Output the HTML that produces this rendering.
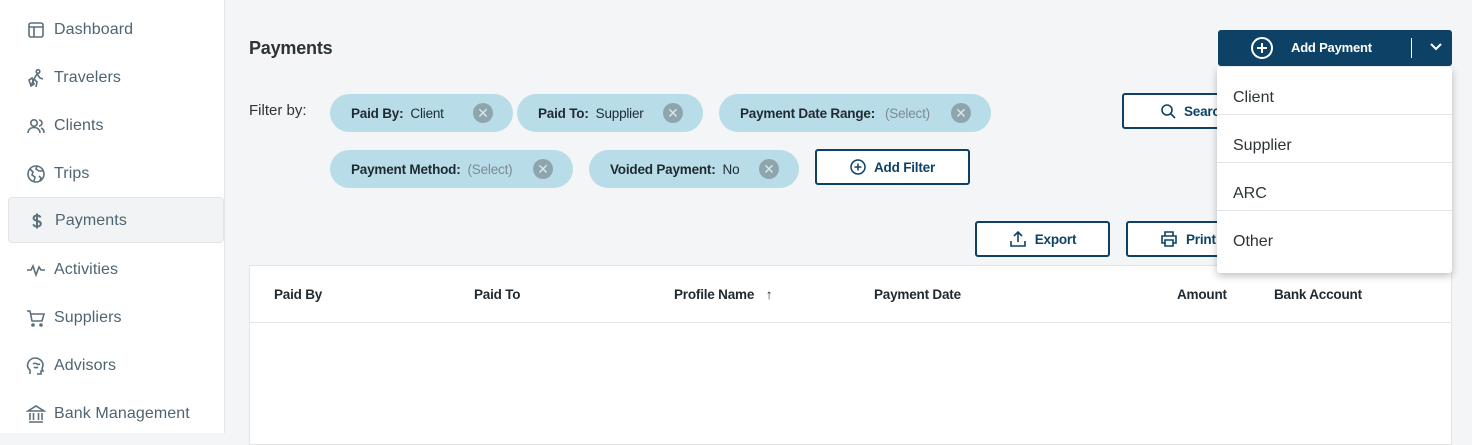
<!DOCTYPE html>
<html><head><meta charset="utf-8"><style>
*{box-sizing:border-box;margin:0;padding:0}
body{width:1472px;height:433px;overflow:hidden;background:#f4f5f7;font-family:"Liberation Sans",sans-serif;position:relative}
.side{position:absolute;left:0;top:0;width:225px;height:433px;background:#fff;border-right:1px solid #e3e5e8}
.nav{position:absolute;left:8px;width:216px;height:46px;display:flex;align-items:center;padding-left:18px;font-size:16px;color:#4f6472;letter-spacing:.1px}
.nav svg{width:20px;height:20px;margin-right:8px;fill:none;stroke:#5b6f7c;stroke-width:1.6}
.nav.act{background:#f2f3f4;border:1px solid #e3e5e8;border-radius:4px}
.abs{position:absolute}
.chip{position:absolute;height:38px;border-radius:19px;background:#b9dde8;display:flex;align-items:center;padding-left:21px;font-size:13.5px;color:#1f2a30;letter-spacing:-.2px}
.chip b{font-weight:bold;margin-right:7px}
.chip .sel{color:#7a8a90}
.chip .x{position:absolute;right:20px;top:9px;width:20px;height:20px;border-radius:50%;background:#8fa5ae;color:#d8e8ee;font-size:14px;line-height:20px;text-align:center;letter-spacing:0}
.btn{position:absolute;border:2px solid #0d4266;border-radius:3px;background:#fff;color:#0d4266;font-size:13.5px;font-weight:bold;display:flex;align-items:center;justify-content:center;gap:8px;letter-spacing:-.2px}
.th{position:absolute;top:287px;font-size:13.5px;font-weight:bold;color:#1f2a30;letter-spacing:-.2px}
.dd{position:absolute;left:1217px;top:67px;width:235px;height:206px;background:#fff;border-radius:3px;box-shadow:0 3px 8px rgba(0,0,0,.25)}
.dd div{height:48px;border-bottom:1px solid #e2e4e6;padding-left:16px;line-height:62px;font-size:16px;color:#2c3438}
</style></head><body>
<div class="side">
<div class="nav" style="top:7px"><svg viewBox="0 0 20 20"><rect x="3" y="3" width="14" height="14" rx="2"/><path d="M3 7h14M8 7v10"/></svg>Dashboard</div>
<div class="nav" style="top:55px"><svg viewBox="0 0 20 20"><circle cx="12" cy="3.5" r="1.8"/><path d="M11 6l-3 5 3 3-1 5M11 6l3 4 3 1M8 11l-3 7M3 12l3-2 2 6-3 2z"/></svg>Travelers</div>
<div class="nav" style="top:103px"><svg viewBox="0 0 20 20"><circle cx="8" cy="7" r="3.2"/><path d="M2 17c0-3.5 2.7-5.5 6-5.5s6 2 6 5.5M13 4a3 3 0 010 6M15 12c2 .7 3 2.5 3 5"/></svg>Clients</div>
<div class="nav" style="top:151px"><svg viewBox="0 0 20 20"><circle cx="10" cy="10" r="8"/><path d="M4 5l3 3-1 3 3 2-1 4M11 2l-1 3 3 2 4 0M13 12l2 2-1 3"/></svg>Trips</div>
<div class="nav act" style="top:197px;padding-top:2px"><svg viewBox="0 0 20 20" style="stroke-width:2"><path d="M13.5 6.5c-.5-1.3-1.8-2-3.5-2-2 0-3.4 1-3.4 2.6 0 3.5 7.2 2 7.2 5.6 0 1.6-1.5 2.8-3.8 2.8-1.8 0-3.2-.8-3.7-2.2M10 2.5v15"/></svg>Payments</div>
<div class="nav" style="top:247px"><svg viewBox="0 0 20 20"><path d="M1 10h4l2-4 3 9 3-8 2 3h4"/></svg>Activities</div>
<div class="nav" style="top:295px"><svg viewBox="0 0 20 20"><path d="M1 3h3l2 10h10l2-7H5"/><circle cx="7" cy="17" r="1" fill="#5b6f7c"/><circle cx="15" cy="17" r="1" fill="#5b6f7c"/></svg>Suppliers</div>
<div class="nav" style="top:343px"><svg viewBox="0 0 20 20"><path d="M4 18v-4c-2-1.5-3-4-2-7 1-3 4-5 7-5 4 0 8 3 8 7 0 2-1 3-1 4l1 2h-2v3h-4"/><path d="M7 8c1-1 3-1 4 0s3 0 3 0M8 11c1 1 3 1 4 0"/></svg>Advisors</div>
<div class="nav" style="top:391px"><svg viewBox="0 0 20 20"><path d="M2 7l8-5 8 5zM3 18h14M2 7h16M4 9v7M7.5 9v7M12.5 9v7M16 9v7"/></svg>Bank Management</div>
</div>

<div class="abs" style="left:249px;top:38px;font-size:18px;font-weight:bold;color:#2c3438;letter-spacing:-.2px">Payments</div>
<div class="abs" style="left:249px;top:102px;font-size:15px;color:#2c3438">Filter by:</div>

<div class="chip" style="left:330px;top:94px;width:183px"><b>Paid By:</b>Client<span class="x">✕</span></div>
<div class="chip" style="left:517px;top:94px;width:186px"><b>Paid To:</b>Supplier<span class="x">✕</span></div>
<div class="chip" style="left:719px;top:94px;width:272px"><b>Payment Date Range:</b><span class="sel" style="margin-left:3px">(Select)</span><span class="x">✕</span></div>
<div class="chip" style="left:330px;top:150px;width:243px"><b>Payment Method:</b><span class="sel">(Select)</span><span class="x">✕</span></div>
<div class="chip" style="left:589px;top:150px;width:210px"><b>Voided Payment:</b>No<span class="x">✕</span></div>
<div class="btn" style="left:815px;top:149px;width:155px;height:36px"><svg width="16" height="16" viewBox="0 0 16 16" fill="none" stroke="#0d4266" stroke-width="1.5"><circle cx="8" cy="8" r="7"/><path d="M8 4.5v7M4.5 8h7"/></svg>Add Filter</div>
<div class="btn" style="left:1122px;top:93px;width:140px;height:36px;justify-content:flex-start;padding-left:36px"><svg width="16" height="16" viewBox="0 0 16 16" fill="none" stroke="#0d4266" stroke-width="1.6"><circle cx="7" cy="7" r="5"/><path d="M11 11l4 4"/></svg>Search</div>
<div class="btn" style="left:975px;top:221px;width:135px;height:36px"><svg width="18" height="18" viewBox="0 0 18 18" fill="none" stroke="#0d4266" stroke-width="1.6"><path d="M9 12V2M5 6l4-4 4 4M2 11v5h14v-5"/></svg>Export</div>
<div class="btn" style="left:1126px;top:221px;width:135px;height:36px;justify-content:flex-start;padding-left:32px"><svg width="18" height="18" viewBox="0 0 18 18" fill="none" stroke="#0d4266" stroke-width="1.6"><path d="M5 6V2h8v4M5 13H2V6h14v7h-3M5 10h8v6H5z"/></svg>Print</div>

<div class="abs" style="left:249px;top:265px;width:1203px;height:180px;background:#fff;border:1px solid #e2e4e6"></div>
<div class="abs" style="left:250px;top:322px;width:1201px;height:1px;background:#e2e4e6"></div>
<div class="th" style="left:274px">Paid By</div>
<div class="th" style="left:474px">Paid To</div>
<div class="th" style="left:674px">Profile Name <span style="font-weight:normal;margin-left:8px">↑</span></div>
<div class="th" style="left:874px">Payment Date</div>
<div class="th" style="left:1177px">Amount</div>
<div class="th" style="left:1274px">Bank Account</div>

<div class="abs" style="left:1218px;top:30px;width:234px;height:36px;background:#0d4266;border-radius:3px;color:#fff;font-size:13px;font-weight:bold;letter-spacing:-.2px">
<svg class="abs" style="left:32px;top:6px" width="24" height="24" viewBox="0 0 24 24" fill="none" stroke="#fff" stroke-width="2"><circle cx="12" cy="12" r="10"/><path d="M12 7v10M7 12h10"/></svg>
<span class="abs" style="left:73px;top:10px">Add Payment</span>
<div class="abs" style="left:193px;top:8px;width:1px;height:20px;background:#fff"></div>
<svg class="abs" style="left:211px;top:12px" width="14" height="10" viewBox="0 0 14 10" fill="none" stroke="#fff" stroke-width="2"><path d="M2 2l5 5 5-5"/></svg>
</div>
<div class="dd"><div>Client</div><div>Supplier</div><div>ARC</div><div style="border:none">Other</div></div>
</body></html>
